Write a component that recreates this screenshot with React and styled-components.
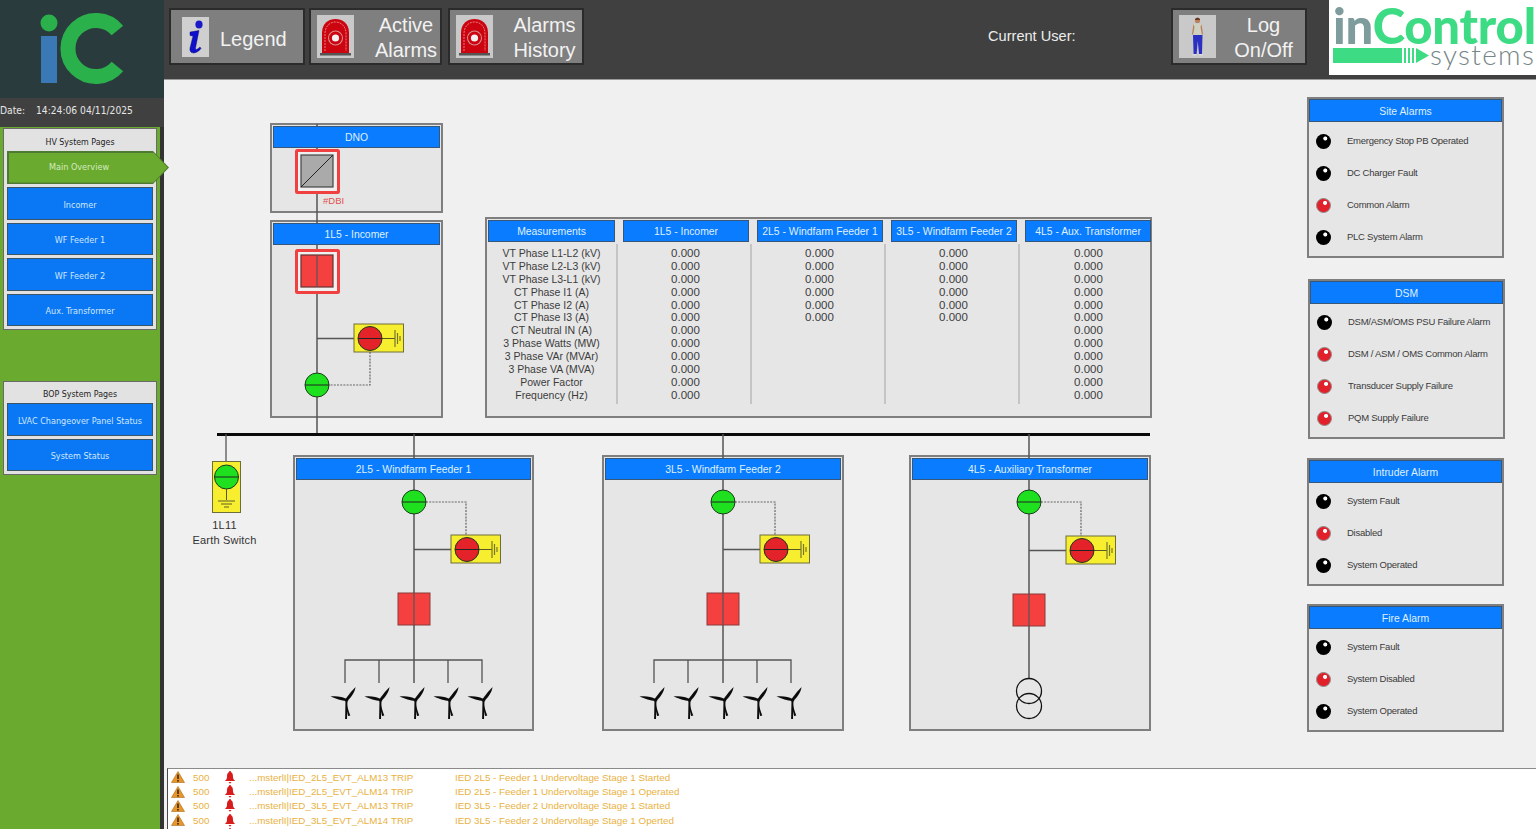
import React from "react";
import styled, { createGlobalStyle } from "styled-components";

const Global = createGlobalStyle`
  html, body { margin: 0; padding: 0; height: 100%; overflow: hidden; background: #f0f0f0; }
  #root { height: 100%; }
  * { box-sizing: border-box; }
`;

const OX = 164;
const OY = 80;
const SANS = `"Liberation Sans", Arial, sans-serif`;
const NARROW = `"DejaVu Sans", Tahoma, sans-serif`;

const Page = styled.div`
  display: grid;
  grid-template-columns: 164px 1fr;
  width: 1536px;
  height: 829px;
  overflow: hidden;
  font-family: ${SANS};
`;

/* ---------- sidebar ---------- */
const Sidebar = styled.aside`
  display: flex;
  flex-direction: column;
  height: 829px;
  position: relative;
  z-index: 5;
`;
const LogoBlock = styled.div`
  height: 98px;
  background: #2a3b3d;
  flex: none;
`;
const DateBar = styled.div`
  height: 29px;
  flex: none;
  background: #404040;
  color: #e6e6e6;
  font: 10.2px ${NARROW};
  font-stretch: condensed;
  display: flex;
  align-items: center;
  padding-bottom: 5px;
  white-space: nowrap;
`;
const DateLabel = styled.span`
  width: 36px;
`;
const Nav = styled.nav`
  flex: 1;
  background: #6aaa2e;
  border-right: 4px solid #333;
  padding: 1px 3px 0;
  display: flex;
  flex-direction: column;
  gap: 51px;
`;
const NavGroup = styled.section`
  width: 154px;
  background: #e2e2e2;
  border: 1px solid #6a6a6a;
  padding: 0 3px 3px 3px;
  display: flex;
  flex-direction: column;
  gap: 3px;
`;
const NavHeading = styled.div`
  font: 8.8px ${NARROW};
  font-stretch: condensed;
  color: #222;
  text-align: center;
  height: 21px;
  line-height: ${p => p.$tight ? 27 : 24}px;
  margin-bottom: ${p => p.$tight ? -2 : -3}px;
`;
const NavButton = styled.button`
  display: block;
  width: 100%;
  height: 32.5px;
  padding: 3px 0 0;
  background: #0a78f5;
  border: 1.5px solid #3a5468;
  color: #cfe6ff;
  font: 9px ${NARROW};
  font-stretch: condensed;
  text-align: center;
`;
const ActiveNav = styled.div`
  width: 162px;
  height: 33px;
  background: #4f7a33;
  clip-path: polygon(0 0, 146px 0, 100% 50%, 146px 100%, 0 100%);
  position: relative;
  color: #d5ecc0;
  font: 9px ${NARROW};
  font-stretch: condensed;
  line-height: 33px;
  text-align: center;
  padding-right: 18px;
  isolation: isolate;
  &::before {
    content: "";
    position: absolute;
    inset: 1.5px;
    background: #6aaa2e;
    clip-path: polygon(0 0, 145px 0, 100% 50%, 145px 100%, 0 100%);
    z-index: -1;
  }
`;

/* ---------- main ---------- */
const Main = styled.div`
  display: flex;
  flex-direction: column;
  height: 829px;
  min-width: 0;
`;
const Header = styled.header`
  height: 80px;
  flex: none;
  background: #404040;
  border-bottom: 1px solid #9a9a9a;
  display: flex;
  align-items: flex-start;
  padding: 8px 0 0 5px;
  position: relative;
`;
const HeaderButton = styled.button`
  width: ${p => p.$w}px;
  height: 57px;
  margin-right: ${p => p.$mr || 0}px;
  background: #7f7f7f;
  border: 2px solid #2b2b2b;
  color: #f2f2f2;
  font: 20px/25px ${SANS};
  padding: 0;
  display: flex;
  align-items: center;
  flex: none;
`;
const IconSlot = styled.span`
  display: flex;
  flex: none;
  margin-left: ${p => p.$ml}px;
`;
const BtnLabel = styled.span`
  flex: 1;
  text-align: ${p => p.$left ? "left" : "center"};
  padding-left: ${p => p.$pl || 0}px;
  padding-right: ${p => p.$pr || 0}px;
  padding-top: ${p => p.$pt || 3}px;
`;
const CurrentUser = styled.div`
  color: #ededed;
  font-size: 14.6px;
  margin-left: 404px;
  line-height: 57px;
  width: 183px;
  flex: none;
`;
const Brand = styled.div`
  position: absolute;
  right: 0;
  top: 0;
  width: 207px;
  height: 75px;
  background: #fff;
  overflow: hidden;
  padding-left: 4px;
`;
const BrandName = styled.div`
  font: 900 49px/46px Lato, "Open Sans", sans-serif;
  letter-spacing: -0.2px;
  color: #3ddc84;
  white-space: nowrap;
  height: 46px;
  margin-top: 2px;
`;
const BrandIn = styled.span`
  color: #7f9c9c;
`;
const BrandSub = styled.div`
  display: flex;
  align-items: flex-start;
`;
const BrandWord = styled.span`
  font: 300 28px/24px Lato, "Open Sans", sans-serif;
  color: #768686;
  letter-spacing: 1.3px;
  margin: -6px 0 0 1px;
`;

const Workspace = styled.div`
  flex: 1;
  display: flex;
  min-height: 0;
  background: #f0f0f0;
`;
const Diagram = styled.div`
  position: relative;
  flex: 1;
  min-width: 0;
`;
const Wires = styled.svg`
  position: absolute;
  left: 0;
  top: 0;
  z-index: 1;
  overflow: visible;
  pointer-events: none;
`;
const Panel = styled.section`
  position: absolute;
  left: ${p => p.$x - OX}px;
  top: ${p => p.$y - OY}px;
  width: ${p => p.$w}px;
  height: ${p => p.$h}px;
  background: #e6e6e6;
  border: 2px solid #7f7f7f;
  padding: 1px;
`;
const Title = styled.div`
  position: relative;
  z-index: 2;
  height: 22px;
  line-height: 21px;
  background: #0a7cff;
  border: 1px solid #36577a;
  color: #dff0ff;
  font-size: 10.4px;
  text-align: center;
  white-space: nowrap;
`;
const EarthLabel = styled.div`
  position: absolute;
  left: ${189 - OX}px;
  top: ${518 - OY}px;
  width: 71px;
  text-align: center;
  font-size: 11px;
  line-height: 15px;
  color: #333;
  letter-spacing: 0.2px;
`;

/* measurements */
const MeasureTable = styled.section`
  position: absolute;
  left: ${485 - OX}px;
  top: ${217 - OY}px;
  width: 667px;
  height: 201px;
  background: #e6e6e6;
  border: 2px solid #7f7f7f;
  padding: 1px 0 0 0;
  display: grid;
  grid-template-columns: repeat(5, 134px);
  z-index: 2;
`;
const MeasureCol = styled.div`
  display: flex;
  flex-direction: column;
  padding-left: ${p => p.$first ? 1 : 2}px;
`;
const MeasureHead = styled(Title)`
  width: ${p => p.$first ? 127 : 126}px;
`;
const MeasureBody = styled.div`
  width: 131px;
  margin-left: ${p => p.$first ? -1 : -2}px;
  height: 160px;
  margin-top: 2px;
  padding-top: 3px;
  border-right: ${p => p.$last ? "none" : "2px solid #c4c4c4"};
  text-align: center;
  color: #3c3c3c;
`;
const MeasureLine = styled.div`
  height: 12.9px;
  line-height: 12.9px;
  font-size: ${p => p.$value ? 11.5 : 10.5}px;
  white-space: nowrap;
`;

/* alarms */
const AlarmColumn = styled.aside`
  flex: none;
  width: 229px;
  padding-top: 17px;
  display: flex;
  flex-direction: column;
`;
const AlarmPanel = styled.section`
  width: 197px;
  margin-left: ${p => p.$shift || 0}px;
  margin-top: ${p => p.$top || 0}px;
  background: #e6e6e6;
  border: 2px solid #7f7f7f;
  padding: 0 0 3px 0;
`;
const AlarmTitle = styled(Title)`
  margin-bottom: ${p => p.$mb}px;
  height: 23px;
  line-height: 24px;
`;
const AlarmRow = styled.div`
  display: flex;
  align-items: center;
  height: 32px;
  padding: 0 0 2px 7px;
  font-size: 9.5px;
  letter-spacing: -0.25px;
  color: #3a3a3a;
  white-space: nowrap;
`;
const Led = styled.span`
  width: 15px;
  height: 15px;
  border-radius: 50%;
  flex: none;
  margin: 2px 16px 0 0;
  background:
    radial-gradient(circle at 62% 30%, #fff 0 1.6px, transparent 2.4px),
    ${p => p.$on ? "#e2202a" : "#000"};
  border: ${p => p.$on ? "1px solid #8f8f8f" : "none"};
`;

/* banner */
const Banner = styled.div`
  flex: none;
  height: 61px;
  margin-left: 3px;
  background: #fff;
  border-top: 1px solid #8a8a8a;
  border-left: 1px solid #4a4a4a;
  padding: 1px 0 0 3px;
  overflow: hidden;
  position: relative;
  z-index: 2;
`;
const EventRow = styled.div`
  display: grid;
  grid-template-columns: 22px 31px 25px 142px 64px 1fr;
  align-items: center;
  height: 14.4px;
  color: #e9b23f;
  font-size: 9.8px;
  white-space: nowrap;
`;
const EventIcon = styled.svg`
  display: block;
`;

/* ---------- drawings ---------- */
const LogoIC = () => (
  <svg width="164" height="98" viewBox="0 0 164 98">
    <circle cx="49" cy="23" r="8.5" fill="#2bb14c" />
    <rect x="41" y="36" width="16" height="47" fill="#3a78b6" />
    <path d="M117.4 30.5 A28 28 0 1 0 117.4 66.5" fill="none" stroke="#2bb14c" strokeWidth="15" />
  </svg>
);
const InfoIcon = () => (
  <svg width="27" height="40" viewBox="0 0 27 40">
    <rect width="27" height="40" fill="#cfcfcf" />
    <ellipse cx="17" cy="7.5" rx="3.6" ry="4" fill="#1a18c8" />
    <path d="M8 15 L17 13.5 L13.5 31 C13.2 33 15 33 18 30 L19 31.5 C15 37 7 38 8 31 L11 19 L8 18.5 Z" fill="#1010cc" stroke="#000060" strokeWidth="0.4" />
  </svg>
);
const AlarmIcon = () => (
  <svg width="37" height="43" viewBox="0 0 37 43">
    <rect width="37" height="43" fill="#c9c9c9" />
    <path d="M5 38 V18 C5 8 12 4 18.5 4 C25 4 32 8 32 18 V38 Z" fill="#cc0410" />
    <path d="M8 36 V19 C8 11 13 7 18.5 7 C24 7 29 11 29 19 V36" fill="none" stroke="#f2b0b0" strokeWidth="0.7" strokeDasharray="2 1" />
    <circle cx="18.5" cy="23" r="7.5" fill="#d89090" />
    <circle cx="18.5" cy="23" r="6.5" fill="#cc0410" />
    <circle cx="18.5" cy="23" r="3.6" fill="#f5f0f0" />
    <rect x="3" y="38" width="31" height="2.5" fill="#555" />
  </svg>
);
const UserIcon = () => (
  <svg width="37" height="43" viewBox="0 0 37 43">
    <rect width="37" height="43" fill="#c9c9c9" />
    <circle cx="18.5" cy="5.5" r="2.6" fill="#b9805a" />
    <path d="M16 4 Q18.5 1 21 4 L21 5 L16 5 Z" fill="#6a3a20" />
    <path d="M14.5 9 H22.5 L23 21 H14 Z" fill="#d0d0c0" />
    <path d="M14.5 9 L13 19 L14 20 L15.5 12 Z M22.5 9 L24 19 L23 20 L21.5 12 Z" fill="#b9805a" />
    <path d="M14 20 H23.5 L23 39 H20 L18.8 26 L17.6 39 H14.6 Z" fill="#2c30c0" />
    <rect x="13.5" y="39" width="4" height="1.5" fill="#dcdcdc" />
    <rect x="19.8" y="39" width="4" height="1.5" fill="#dcdcdc" />
  </svg>
);
const BrandMark = () => (
  <svg width="96" height="16" viewBox="0 0 96 16">
    <rect x="0" y="0" width="69" height="15" fill="#3ddc84" />
    <rect x="71" y="0" width="2" height="15" fill="#3ddc84" />
    <rect x="75" y="0" width="2" height="15" fill="#3ddc84" />
    <rect x="79" y="0" width="2" height="15" fill="#3ddc84" />
    <path d="M83 0 L96 7.5 L83 15 Z" fill="#3ddc84" />
  </svg>
);
const WarnIcon = () => (
  <EventIcon width="14" height="12" viewBox="0 0 14 12">
    <path d="M7 0.5 L13.5 11.5 H0.5 Z" fill="#e8952a" stroke="#a86a18" strokeWidth="0.6" />
    <rect x="6.2" y="3.5" width="1.6" height="4.5" fill="#3a2a10" />
    <rect x="6.2" y="9" width="1.6" height="1.6" fill="#3a2a10" />
  </EventIcon>
);
const BellIcon = () => (
  <EventIcon width="12" height="13" viewBox="0 0 12 13">
    <circle cx="6" cy="1.2" r="1.1" fill="#d81c1c" />
    <path d="M6 1 C3.5 1 3 3.5 3 6 C3 8 2 9 0.8 10 H11.2 C10 9 9 8 9 6 C9 3.5 8.5 1 6 1 Z" fill="#d81c1c" />
    <path d="M4.5 11 H7.5 L6 12.8 Z" fill="#d81c1c" />
  </EventIcon>
);

const Circle = ({ cx, cy, color }) => (
  <g>
    <circle cx={cx} cy={cy} r="12" fill={color} stroke="#1d3a1d" strokeWidth="1" />
    <line x1={cx - 12} y1={cy} x2={cx + 12} y2={cy} stroke="#222" strokeWidth="1" />
  </g>
);

const EarthBox = ({ x, y, wireFrom }) => (
  <g>
    <line x1={wireFrom} y1={y + 14.5} x2={x} y2={y + 14.5} stroke="#555" strokeWidth="1.3" />
    <rect x={x} y={y} width="49.5" height="28" fill="#f7ee30" stroke="#6e6e3a" strokeWidth="1" />
    <line x1={x + 16} y1={y + 14.5} x2={x + 41} y2={y + 14.5} stroke="#5a5a20" strokeWidth="1" />
    <line x1={x + 41} y1={y + 6} x2={x + 41} y2={y + 23} stroke="#77772a" strokeWidth="1.2" />
    <line x1={x + 43.5} y1={y + 9} x2={x + 43.5} y2={y + 20} stroke="#77772a" strokeWidth="1.2" />
    <line x1={x + 46} y1={y + 12} x2={x + 46} y2={y + 17} stroke="#77772a" strokeWidth="1.2" />
    <Circle cx={x + 16} cy={y + 14.5} color="#e3222a" />
  </g>
);

const Turbine = ({ x, y }) => (
  <g transform={`translate(${x} ${y})`} fill="#0c0c0c">
    <path d="M0 -0.8 C-4 -3.5 -10 -4.2 -16 -3.5 C-11 -1.5 -5 1 0 1 Z" />
    <path d="M-1 -0.5 C1 -4 5.5 -9.5 9 -13 C8.5 -8 5 -3 1 0.8 Z" />
    <path d="M-1 0 L-1.4 19 L0.5 19 L1 0 Z" />
    <path d="M0.2 3 C1 8 2.4 12 3.8 15.5 L1.6 16 L-0.4 7 Z" />
    <circle cx="0" cy="0" r="1.8" />
  </g>
);

const Feeder = ({ cx, dy = 0, turbines }) => {
  const boxX = cx + 37;
  const gy = 502;
  return (
    <g>
      <line x1={cx} y1="434" x2={cx} y2={turbines ? 683 : 679} stroke="#555" strokeWidth="1.5" />
      <path d={`M${cx + 12} ${gy} H${cx + 52} V${535 + dy}`} fill="none" stroke="#666" strokeWidth="1.2" strokeDasharray="2 1.2" />
      <EarthBox x={boxX} y={535 + dy} wireFrom={cx} />
      <Circle cx={cx} cy={gy} color="#1ee01e" />
      <rect x={cx - 16} y={593 + dy} width="32" height="32" fill="#f54040" stroke="#8a3a3a" strokeWidth="1" />
      <line x1={cx} y1={593 + dy} x2={cx} y2={625 + dy} stroke="#555" strokeWidth="1.2" />
      {turbines && (
        <g>
          <path
            d={`M${cx - 69} 683 V660 H${cx + 68} V683 M${cx - 35} 660 V683 M${cx + 34} 660 V683`}
            fill="none"
            stroke="#555"
            strokeWidth="1.3"
          />
          {[-69, -35, 0, 34, 68].map(d => <Turbine key={d} x={cx + d + 1.5} y={700} />)}
        </g>
      )}
    </g>
  );
};

const SingleLine = () => (
  <Wires width="1143" height="688" viewBox={`${OX} ${OY} 1143 688`}>
    <line x1="317" y1="124" x2="317" y2="434" stroke="#555" strokeWidth="1.5" />
    <rect x="296.5" y="150.5" width="42" height="42" rx="1" fill="#f0f0f0" stroke="#f04040" strokeWidth="3" />
    <rect x="301" y="155" width="32" height="32" fill="#aaaaaa" stroke="#444" strokeWidth="1.2" />
    <line x1="301" y1="187" x2="333" y2="155" stroke="#222" strokeWidth="1" />
    <text x="323" y="203.5" fill="#e05050" fontSize="9.5" fontFamily={SANS}>#DBI</text>
    <rect x="296.5" y="250.5" width="42" height="42" rx="1" fill="#f0f0f0" stroke="#f04040" strokeWidth="3" />
    <rect x="301" y="255" width="32" height="32" fill="#f54040" stroke="#663333" strokeWidth="1.2" />
    <line x1="317" y1="255" x2="317" y2="287" stroke="#555" strokeWidth="1.2" />
    <path d="M370 352 V385 H329" fill="none" stroke="#666" strokeWidth="1.2" strokeDasharray="2 1.2" />
    <EarthBox x={354} y={324} wireFrom={317} />
    <Circle cx={317} cy={385} color="#1ee01e" />

    <line x1="217" y1="434.5" x2="1150" y2="434.5" stroke="#0a0a0a" strokeWidth="3" />

    <line x1="226" y1="434" x2="226" y2="462" stroke="#555" strokeWidth="1.3" />
    <rect x="212.5" y="461.5" width="28" height="51" fill="#f7ee30" stroke="#6e6e3a" strokeWidth="1" />
    <line x1="226.5" y1="477" x2="226.5" y2="500" stroke="#5a5a20" strokeWidth="1" />
    <line x1="218" y1="501" x2="235" y2="501" stroke="#77772a" strokeWidth="1.2" />
    <line x1="221" y1="504" x2="232" y2="504" stroke="#77772a" strokeWidth="1.2" />
    <line x1="224" y1="507" x2="229" y2="507" stroke="#77772a" strokeWidth="1.2" />
    <Circle cx={226.5} cy={477} color="#1ee01e" />

    <Feeder cx={414} turbines />
    <Feeder cx={723} turbines />
    <Feeder cx={1029} dy={1} />
    <circle cx="1029" cy="691" r="12.5" fill="none" stroke="#111" strokeWidth="1.3" />
    <circle cx="1029" cy="706" r="12.5" fill="none" stroke="#111" strokeWidth="1.3" />
  </Wires>
);

/* ---------- data ---------- */
const labels = [
  "VT Phase L1-L2 (kV)", "VT Phase L2-L3 (kV)", "VT Phase L3-L1 (kV)",
  "CT Phase I1 (A)", "CT Phase I2 (A)", "CT Phase I3 (A)", "CT Neutral IN (A)",
  "3 Phase Watts (MW)", "3 Phase VAr (MVAr)", "3 Phase VA (MVA)", "Power Factor", "Frequency (Hz)",
];
const columns = [
  { head: "1L5 - Incomer", rows: 12 },
  { head: "2L5 - Windfarm Feeder 1", rows: 6 },
  { head: "3L5 - Windfarm Feeder 2", rows: 6 },
  { head: "4L5 - Aux. Transformer", rows: 12 },
];
const alarmGroups = [
  { title: "Site Alarms", mb: 3, rows: [["Emergency Stop PB Operated", 0], ["DC Charger Fault", 0], ["Common Alarm", 1], ["PLC System Alarm", 0]] },
  { title: "DSM", shift: 1, top: 21, mb: 2, rows: [["DSM/ASM/OMS PSU Failure Alarm", 0], ["DSM / ASM / OMS Common Alarm", 1], ["Transducer Supply Failure", 1], ["PQM Supply Failure", 1]] },
  { title: "Intruder Alarm", top: 19, mb: 2, rows: [["System Fault", 0], ["Disabled", 1], ["System Operated", 0]] },
  { title: "Fire Alarm", top: 18, mb: 2, rows: [["System Fault", 0], ["System Disabled", 1], ["System Operated", 0]] },
];
const events = [
  ["...msterlI|IED_2L5_EVT_ALM13", "IED 2L5 - Feeder 1 Undervoltage Stage 1 Started"],
  ["...msterlI|IED_2L5_EVT_ALM14", "IED 2L5 - Feeder 1 Undervoltage Stage 1 Operated"],
  ["...msterlI|IED_3L5_EVT_ALM13", "IED 3L5 - Feeder 2 Undervoltage Stage 1 Started"],
  ["...msterlI|IED_3L5_EVT_ALM14", "IED 3L5 - Feeder 2 Undervoltage Stage 1 Operted"],
];

export default function App() {
  return (
    <Page>
      <Global />
      <Sidebar>
        <LogoBlock><LogoIC /></LogoBlock>
        <DateBar><DateLabel>Date:</DateLabel>14:24:06 04/11/2025</DateBar>
        <Nav>
          <NavGroup>
            <NavHeading $tight>HV System Pages</NavHeading>
            <ActiveNav>Main Overview</ActiveNav>
            {["Incomer", "WF Feeder 1", "WF Feeder 2", "Aux. Transformer"].map(t => <NavButton key={t}>{t}</NavButton>)}
          </NavGroup>
          <NavGroup>
            <NavHeading>BOP System Pages</NavHeading>
            {["LVAC Changeover Panel Status", "System Status"].map(t => <NavButton key={t}>{t}</NavButton>)}
          </NavGroup>
        </Nav>
      </Sidebar>
      <Main>
        <Header>
          <HeaderButton $w={136} $mr={4}>
            <IconSlot $ml={11}><InfoIcon /></IconSlot>
            <BtnLabel $left $pl={11} $pt={5}>Legend</BtnLabel>
          </HeaderButton>
          <HeaderButton $w={133} $mr={6}>
            <IconSlot $ml={6}><AlarmIcon /></IconSlot>
            <BtnLabel $pl={18}>Active<br />Alarms</BtnLabel>
          </HeaderButton>
          <HeaderButton $w={136}>
            <IconSlot $ml={6}><AlarmIcon /></IconSlot>
            <BtnLabel $pl={14}>Alarms<br />History</BtnLabel>
          </HeaderButton>
          <CurrentUser>Current User:</CurrentUser>
          <HeaderButton $w={136}>
            <IconSlot $ml={6}><UserIcon /></IconSlot>
            <BtnLabel $pl={8} $pr={2}>Log<br />On/Off</BtnLabel>
          </HeaderButton>
          <Brand>
            <BrandName><BrandIn>in</BrandIn>Control</BrandName>
            <BrandSub><BrandMark /><BrandWord>systems</BrandWord></BrandSub>
          </Brand>
        </Header>
        <Workspace>
          <Diagram>
            <Panel $x={270} $y={123} $w={173} $h={90}><Title>DNO</Title></Panel>
            <Panel $x={270} $y={220} $w={173} $h={198}><Title>1L5 - Incomer</Title></Panel>
            <Panel $x={293} $y={455} $w={241} $h={276}><Title>2L5 - Windfarm Feeder 1</Title></Panel>
            <Panel $x={602} $y={455} $w={242} $h={276}><Title>3L5 - Windfarm Feeder 2</Title></Panel>
            <Panel $x={909} $y={455} $w={242} $h={276}><Title>4L5 - Auxiliary Transformer</Title></Panel>
            <SingleLine />
            <EarthLabel>1L11<br />Earth Switch</EarthLabel>
            <MeasureTable>
              <MeasureCol $first>
                <MeasureHead $first>Measurements</MeasureHead>
                <MeasureBody $first>
                  {labels.map(l => <MeasureLine key={l}>{l}</MeasureLine>)}
                </MeasureBody>
              </MeasureCol>
              {columns.map((c, i) => (
                <MeasureCol key={c.head}>
                  <MeasureHead>{c.head}</MeasureHead>
                  <MeasureBody $last={i === columns.length - 1}>
                    {Array.from({ length: c.rows }, (_, n) => <MeasureLine $value key={n}>0.000</MeasureLine>)}
                  </MeasureBody>
                </MeasureCol>
              ))}
            </MeasureTable>
          </Diagram>
          <AlarmColumn>
            {alarmGroups.map(g => (
              <AlarmPanel key={g.title} $shift={g.shift} $top={g.top}>
                <AlarmTitle $mb={g.mb}>{g.title}</AlarmTitle>
                {g.rows.map(([t, on]) => (
                  <AlarmRow key={t}><Led $on={!!on} />{t}</AlarmRow>
                ))}
              </AlarmPanel>
            ))}
          </AlarmColumn>
        </Workspace>
        <Banner>
          {events.map(([tag, text]) => (
            <EventRow key={tag}>
              <WarnIcon />
              <span>500</span>
              <BellIcon />
              <span>{tag}</span>
              <span>TRIP</span>
              <span>{text}</span>
            </EventRow>
          ))}
          <EventRow><span /><span /><BellIcon /></EventRow>
        </Banner>
      </Main>
    </Page>
  );
}
